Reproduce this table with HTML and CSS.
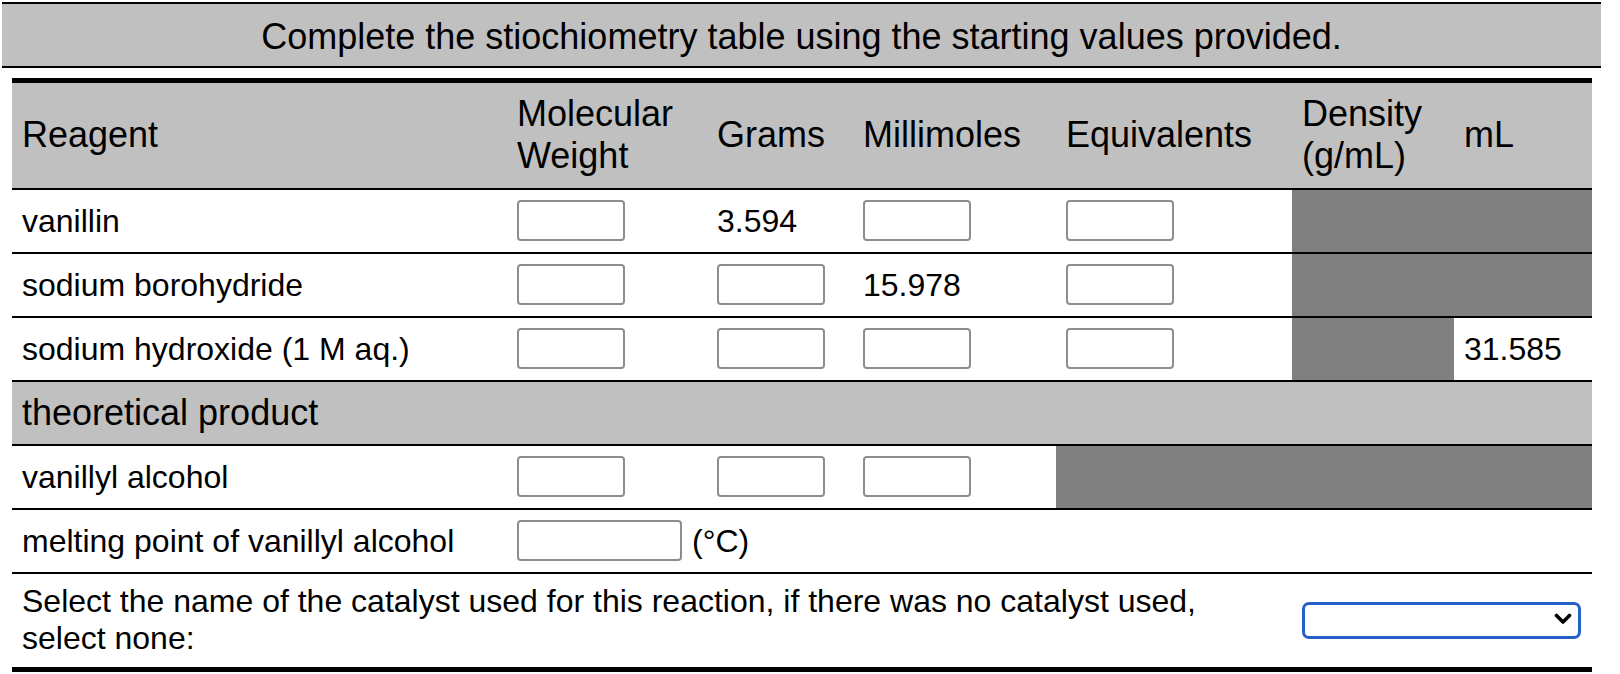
FILE: index.html
```html
<!DOCTYPE html>
<html lang="en">
<head>
<meta charset="utf-8">
<title>Stoichiometry table</title>
<link rel="stylesheet" href="styles.css">
</head>
<body>
<div class="page">
  <div class="title">Complete the stiochiometry table using the starting values provided.</div>
  <div class="table">
    <div class="row head">
      <div class="cell">Reagent</div>
      <div class="cell">Molecular Weight</div>
      <div class="cell">Grams</div>
      <div class="cell">Millimoles</div>
      <div class="cell">Equivalents</div>
      <div class="cell">Density (g/mL)</div>
      <div class="cell">mL</div>
    </div>
    <div class="row">
      <div class="cell">vanillin</div>
      <div class="cell"><input class="box" type="text"></div>
      <div class="cell">3.594</div>
      <div class="cell"><input class="box" type="text"></div>
      <div class="cell"><input class="box" type="text"></div>
      <div class="cell dark span-2"></div>
    </div>
    <div class="row">
      <div class="cell">sodium borohydride</div>
      <div class="cell"><input class="box" type="text"></div>
      <div class="cell"><input class="box" type="text"></div>
      <div class="cell">15.978</div>
      <div class="cell"><input class="box" type="text"></div>
      <div class="cell dark span-2"></div>
    </div>
    <div class="row">
      <div class="cell">sodium hydroxide (1 M aq.)</div>
      <div class="cell"><input class="box" type="text"></div>
      <div class="cell"><input class="box" type="text"></div>
      <div class="cell"><input class="box" type="text"></div>
      <div class="cell"><input class="box" type="text"></div>
      <div class="cell dark"></div>
      <div class="cell">31.585</div>
    </div>
    <div class="row section">
      <div class="cell span-7">theoretical product</div>
    </div>
    <div class="row">
      <div class="cell">vanillyl alcohol</div>
      <div class="cell"><input class="box" type="text"></div>
      <div class="cell"><input class="box" type="text"></div>
      <div class="cell"><input class="box" type="text"></div>
      <div class="cell dark span-3"></div>
    </div>
    <div class="row">
      <div class="cell">melting point of vanillyl alcohol</div>
      <div class="cell span-6 unit"><input class="box wide" type="text"><span>(°C)</span></div>
    </div>
    <div class="row last">
      <div class="cell span-5 prompt">Select the name of the catalyst used for this reaction, if there was no catalyst used, select none:</div>
      <div class="cell span-2">
        <div class="picker">
          <select class="choice"><option></option><option>none</option></select>
          <svg class="chev" width="18" height="12" viewBox="0 0 18 12"><polyline points="2.5,2.5 9,9 15.5,2.5" fill="none" stroke="#000" stroke-width="3.6" stroke-linecap="round" stroke-linejoin="round"/></svg>
        </div>
      </div>
    </div>
  </div>
</div>
</body>
</html>
```

FILE: styles.css
```css
* { box-sizing: border-box; }

html, body {
  margin: 0;
  padding: 0;
  background: #fff;
}

body {
  font-family: "Liberation Sans", Arial, Helvetica, sans-serif;
  color: #000;
  font-size: 32px;
}

.page {
  padding: 2px;
}

.title {
  width: 1599px;
  height: 66px;
  background: #c0c0c0;
  border-top: 2px solid #000;
  border-bottom: 2px solid #000;
  font-size: 36px;
  display: flex;
  align-items: center;
  justify-content: center;
  padding-top: 3px;
}

.table {
  width: 1580px;
  margin: 10px 0 0 10px;
  border-top: 5px solid #000;
  border-bottom: 5px solid #000;
}

.row {
  display: grid;
  grid-template-columns: 495px 200px 146px 203px 236px 162px 138px;
  height: 64px;
  border-bottom: 2px solid #000;
}

.row.last {
  height: 93px;
  border-bottom: none;
}

.head {
  height: 107px;
  background: #c0c0c0;
  font-size: 36px;
}

.section {
  background: #c0c0c0;
  font-size: 36px;
}

.cell {
  display: flex;
  align-items: center;
  padding: 0 10px;
  min-width: 0;
}

.head .cell {
  padding-bottom: 2px;
}

.dark {
  background: #808080;
}

.span-2 { grid-column: span 2; }
.span-3 { grid-column: span 3; }
.span-5 { grid-column: span 5; }
.span-6 { grid-column: span 6; }
.span-7 { grid-column: span 7; }

.box {
  width: 108px;
  height: 41px;
  border: 2px solid #8d8d8d;
  border-radius: 4px;
  background: #fff;
  margin: 0 0 2px 0;
  padding: 0 6px;
  font: inherit;
  font-size: 24px;
}

.box.wide {
  width: 165px;
}

.unit span {
  margin-left: 10px;
}

.prompt {
  padding-right: 40px;
  padding-bottom: 2px;
}

.picker {
  position: relative;
  width: 279px;
  height: 37px;
  margin-bottom: 5px;
}

.choice {
  appearance: none;
  -webkit-appearance: none;
  width: 279px;
  height: 37px;
  margin: 0;
  border: 3.5px solid #2361c8;
  border-radius: 7px;
  background: #fff;
  font: inherit;
  font-size: 24px;
  color: #000;
}

.chev {
  position: absolute;
  right: 9px;
  top: 13px;
  pointer-events: none;
}
```
